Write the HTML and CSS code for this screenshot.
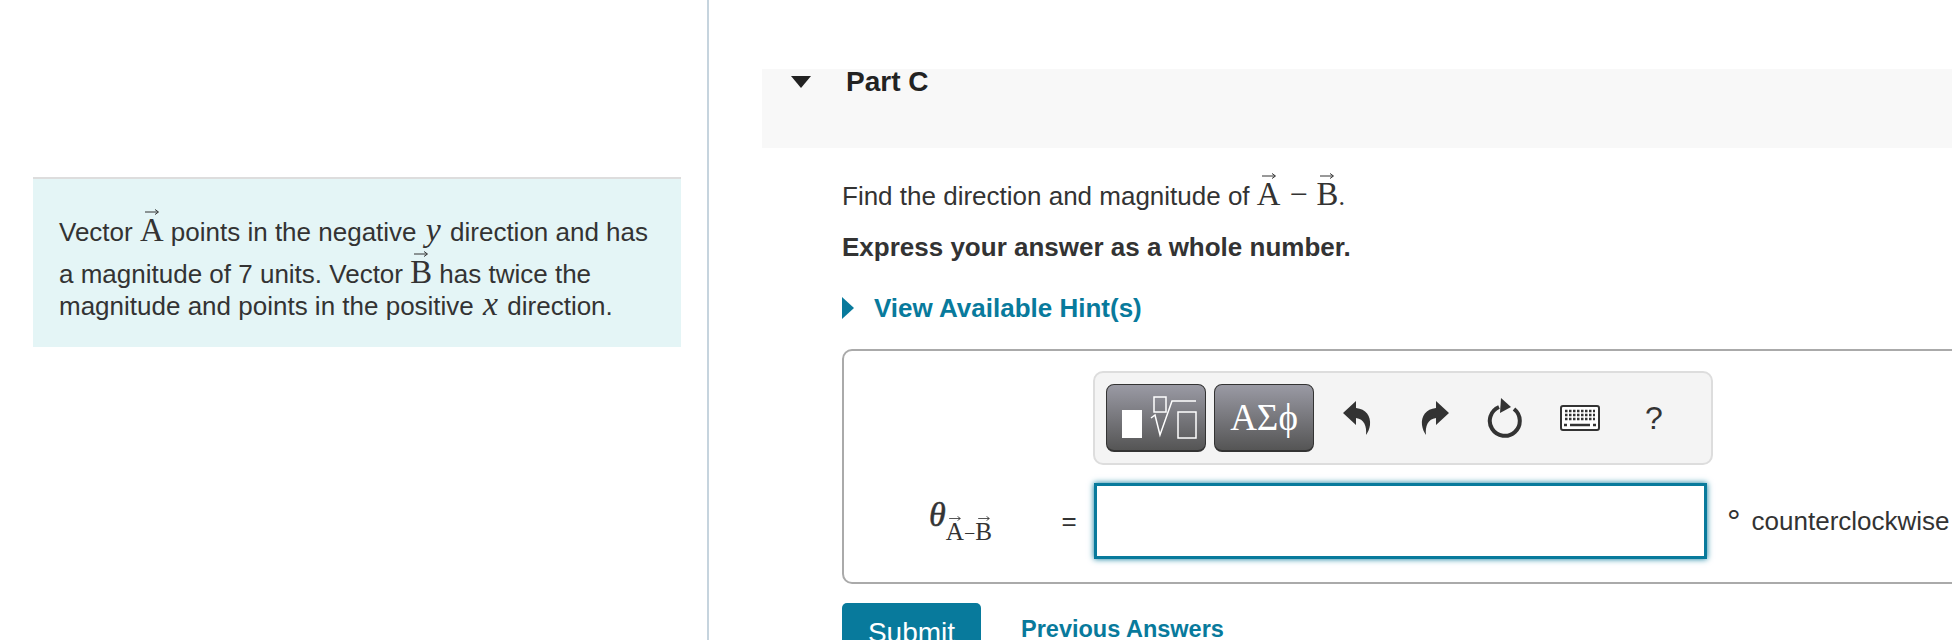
FILE: index.html
```html
<!DOCTYPE html>
<html lang="en">
<head>
<meta charset="utf-8">
<title>Part C</title>
<link rel="stylesheet" href="styles.css">
</head>
<body>
<div class="page">
  <aside class="left">
    <div class="intro">
      <p class="intro-line first">Vector <span class="vec">A<svg class="arrow" viewBox="0 0 14 6"><path d="M0 3H13M10 .5L13.500 3L10 5.500" fill="none" stroke="#333"/></svg></span> points in the negative <em class="mi">y</em> direction and has</p>
      <p class="intro-line second">a magnitude of 7 units. Vector <span class="vec">B<svg class="arrow" viewBox="0 0 14 6"><path d="M0 3H13M10 .5L13.500 3L10 5.500" fill="none" stroke="#333"/></svg></span> has twice the</p>
      <p class="intro-line third">magnitude and points in the positive <em class="mi">x</em> direction.</p>
    </div>
  </aside>
  <main class="right">
    <header class="part-head">
      <svg class="caret-down" width="20" height="12" viewBox="0 0 20 12"><path d="M0 0H20L10 12Z" fill="#222"/></svg>
      <h2 class="part-title">Part C</h2>
    </header>
    <section class="content">
      <p class="question">Find the direction and magnitude of <span class="vec">A<svg class="arrow" viewBox="0 0 14 6"><path d="M0 3H13M10 .5L13.500 3L10 5.500" fill="none" stroke="#333"/></svg></span><span class="minus">−</span><span class="vec">B<svg class="arrow" viewBox="0 0 14 6"><path d="M0 3H13M10 .5L13.500 3L10 5.500" fill="none" stroke="#333"/></svg></span><span class="serif">.</span></p>
      <p class="instruction">Express your answer as a whole number.</p>
      <div class="hint">
        <svg class="caret-right" width="12" height="22" viewBox="0 0 12 22"><path d="M0 0L12 11L0 22Z" fill="#087a9c"/></svg>
        <span>View Available Hint(s)</span>
      </div>
      <div class="answer-box">
        <div class="toolbar">
          <button class="tool-btn" type="button" aria-label="Templates">
            <svg width="98" height="65" viewBox="0 0 98 65" fill="none" stroke="#fff" stroke-width="1.5">
              <rect x="15" y="25" width="20" height="28" fill="#fff" stroke="none"/>
              <rect x="47" y="12" width="12" height="15"/>
              <path d="M44 33L48 30L53 50L65 16H89"/>
              <rect x="71" y="27" width="18" height="26"/>
            </svg>
          </button>
          <button class="tool-btn greek" type="button">ΑΣϕ</button>
          <span class="tool-icon undo">
            <svg width="28" height="34" viewBox="0 0 28 34"><path d="M0 12L13 0V7C23 8 28 15 27 24C26.500 28 25 31 23 34C24 25 21 18 13 17V24Z" fill="#333"/></svg>
          </span>
          <span class="tool-icon redo">
            <svg width="28" height="34" viewBox="0 0 28 34"><path d="M28 12L15 0V7C5 8 0 15 1 24C1.500 28 3 31 5 34C4 25 7 18 15 17V24Z" fill="#333"/></svg>
          </span>
          <span class="tool-icon reload">
            <svg width="36" height="40" viewBox="0 0 36 40" fill="none"><path d="M12 9A15 15 0 1 0 27 11" stroke="#333" stroke-width="4"/><path d="M14 0L24 9L13 15Z" fill="#333"/></svg>
          </span>
          <span class="tool-icon keyboard">
            <svg width="40" height="26" viewBox="0 0 40 26"><rect x="1" y="1" width="38" height="24" rx="2" fill="#fff" stroke="#333" stroke-width="2"/><path d="M5 6H35M5 10H35M5 14H35" stroke="#333" stroke-width="2.500" stroke-dasharray="2.500 1.500"/><path d="M10 20H30" stroke="#333" stroke-width="2.500"/><path d="M4 20H7M33 20H36" stroke="#333" stroke-width="2.500"/></svg>
          </span>
          <span class="tool-icon help">?</span>
        </div>
        <div class="answer-row">
          <div class="label"><em class="theta">θ</em><span class="sub"><span class="vec">A<svg class="arrow" viewBox="0 0 14 6"><path d="M0 3H13M10 .5L13.500 3L10 5.500" fill="none" stroke="#333"/></svg></span>−<span class="vec">B<svg class="arrow" viewBox="0 0 14 6"><path d="M0 3H13M10 .5L13.500 3L10 5.500" fill="none" stroke="#333"/></svg></span></span></div>
          <span class="equals">=</span>
          <div class="input"></div>
          <span class="degree">°</span>
          <span class="unit">counterclockwise</span>
        </div>
      </div>
      <div class="actions">
        <button class="submit" type="button">Submit</button>
        <span class="previous">Previous Answers</span>
      </div>
    </section>
  </main>
</div>
</body>
</html>
```
FILE: styles.css
```css
* { box-sizing: border-box; }
html, body { margin: 0; padding: 0; background: #fff; }
body { font-family: "Liberation Sans", Arial, sans-serif; color: #333; font-size: 26px; }
p, h2 { margin: 0; font-weight: normal; }
.page { display: flex; width: 1952px; height: 640px; overflow: hidden; }
.left { flex: none; width: 709px; border-right: 2px solid #c6d4de; padding: 177px 26px 0 33px; }
.intro { height: 170px; background: #e4f5f6; border-top: 2px solid #ddd; padding: 0 0 0 26px; }
.intro-line { white-space: nowrap; line-height: 32px; height: 32px; box-sizing: content-box; }
.first { padding-top: 34px; }
.second { padding-top: 11px; }
.third { margin-top: -1px; }
.vec { position: relative; display: inline-block; font-family: "Liberation Serif", serif; font-size: 1.26em; line-height: 1; }
.arrow { position: absolute; left: 50%; top: -5px; width: 14px; height: 6px; margin-left: -7px; }
.mi { font-family: "Liberation Serif", serif; font-style: italic; font-size: 1.3em; line-height: 1; margin: 0 2px; }
.right { flex: none; width: 1243px; padding: 69px 0 0 53px; }
.part-head { display: flex; height: 79px; background: #f8f8f8; padding-left: 29px; }
.caret-down { margin-top: 7px; }
.part-title { margin-left: 35px; font-size: 28px; font-weight: bold; color: #222; line-height: 26px; }
.content { padding: 30px 0 0 80px; }
.question { line-height: 34px; height: 34px; }
.minus { font-family: "Liberation Serif", serif; font-size: 32px; line-height: 1; margin: 0 9px; }
.serif { font-family: "Liberation Serif", serif; }
.instruction { font-weight: bold; margin-top: 18px; line-height: 34px; }
.hint { display: flex; align-items: center; margin-top: 27px; height: 34px; font-weight: bold; color: #087a9c; }
.caret-right { margin-right: 20px; }
.answer-box { margin-top: 24px; width: 1300px; height: 235px; border: 2px solid #aaa; border-radius: 10px; padding: 20px 0 0 0; }
.toolbar { display: flex; align-items: center; margin-left: 249px; width: 620px; height: 94px; background: #f4f4f4; border: 2px solid #ddd; border-radius: 10px; padding: 0 0 0 11px; }
.tool-btn { flex: none; width: 100px; height: 68px; margin-right: 8px; padding: 0; display: flex; align-items: center; justify-content: center; border: 1px solid #333; border-bottom-width: 2px; border-radius: 8px; background: linear-gradient(#9a9aa4, #555); color: #fff; font-family: "Liberation Serif", serif; font-size: 37px; }
.tool-icon { flex: none; display: flex; align-items: center; justify-content: center; color: #333; }
.undo { width: 69px; }
.redo { width: 88px; }
.reload { width: 52px; }
.keyboard { width: 98px; }
.help { width: 50px; font-size: 32px; }
.answer-row { display: flex; align-items: center; margin-top: 17px; height: 78px; }
.label { width: 206px; padding-left: 85px; font-family: "Liberation Serif", serif; display: flex; }
.theta { font-size: 34px; font-style: italic; line-height: 36px; -webkit-text-stroke: 0.5px #333; }
.sub { font-size: 20px; padding-top: 22px; white-space: nowrap; }
.sub .arrow { top: -3px; width: 12px; height: 5px; margin-left: -6px; }
.equals { width: 38px; margin-right: 6px; text-align: center; }
.input { flex: none; width: 613px; height: 76px; background: #fff; border: 3px solid #087a9c; box-shadow: 0 0 6px #087a9c; }
.degree { margin-left: 20px; font-size: 34px; align-self: flex-start; padding-top: 24px; line-height: 30px; }
.unit { margin-left: 11px; }
.actions { display: flex; align-items: flex-start; margin-top: 19px; }
.submit { flex: none; width: 139px; height: 60px; padding: 0; border: 0; border-radius: 5px; background: #087a9c; color: #fff; font-family: "Liberation Sans", sans-serif; font-size: 28px; }
.previous { margin-left: 40px; padding-top: 13px; font-size: 23.500px; font-weight: bold; color: #087a9c; }
```
